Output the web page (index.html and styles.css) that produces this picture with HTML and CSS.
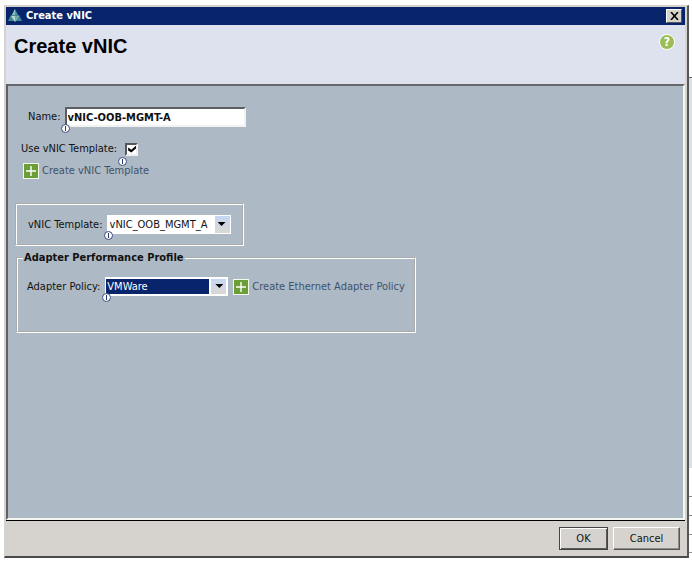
FILE: index.html
```html
<!DOCTYPE html>
<html lang="en">
<head>
<meta charset="utf-8">
<meta name="viewport" content="width=device-width, initial-scale=1">
<title>Create vNIC</title>
<link rel="stylesheet" href="styles.css">
</head>
<body>
<form class="window">
  <div class="titlebar">
    <svg class="app-icon" viewBox="0 0 14 14" aria-hidden="true">
      <path fill="#4f9299" d="M7 0l3 6H4z"/>
      <path fill="#8cc4c0" d="M7 0v6H4z"/>
      <path fill="#3f8794" d="M3 6h8l3 6H0z"/>
      <path fill="#b4d8d0" d="M3 7h8l-4 6z"/>
      <path fill="#6fa9a8" d="M7 7h4l-4 6z"/>
    </svg>
    <span class="caption">Create vNIC</span>
    <button type="button" class="close" aria-label="Close">
      <svg viewBox="0 0 9 8" aria-hidden="true"><path d="M1 0l7 8M8 0L1 8" stroke="#000" stroke-width="1.6"/></svg>
    </button>
  </div>
  <header class="header">
    <h1>Create vNIC</h1>
    <button type="button" class="help" aria-label="Help">?</button>
  </header>
  <main class="content">
    <div class="row name-row">
      <label for="name">Name:</label>
      <span class="field"><input id="name" class="text" type="text" value="vNIC-OOB-MGMT-A"><i class="info"></i></span>
    </div>
    <div class="row use-row">
      <label for="use">Use vNIC Template:</label>
      <span class="field check-field"><input id="use" class="check" type="checkbox" checked><i class="info"></i></span>
    </div>
    <div class="row link-row">
      <a class="create" href="#"><svg class="plus" viewBox="0 0 16 16" aria-hidden="true"><path fill="#f4faee" d="M0 0h16v16H0z"/><path fill="#6b9e37" d="M1 1h14v14H1z"/><path stroke="#fff" stroke-width="1.4" d="M8 3v10M3 8h10"/></svg>Create vNIC Template</a>
    </div>
    <section class="panel template-panel">
      <div class="row">
        <label for="template">vNIC Template:</label>
        <span class="field combo"><select id="template"><option>vNIC_OOB_MGMT_A</option></select><i class="info"></i></span>
      </div>
    </section>
    <fieldset class="panel adapter-panel">
      <legend>Adapter Performance Profile</legend>
      <div class="row">
        <label for="policy">Adapter Policy:</label>
        <span class="field combo selected"><select id="policy"><option>VMWare</option></select><i class="info"></i></span>
        <a class="create" href="#"><svg class="plus" viewBox="0 0 16 16" aria-hidden="true"><path fill="#f4faee" d="M0 0h16v16H0z"/><path fill="#6b9e37" d="M1 1h14v14H1z"/><path stroke="#fff" stroke-width="1.4" d="M8 3v10M3 8h10"/></svg>Create Ethernet Adapter Policy</a>
      </div>
    </fieldset>
  </main>
  <footer class="footer">
    <button type="submit" class="btn default">OK</button>
    <button type="button" class="btn">Cancel</button>
  </footer>
</form>
</body>
</html>
```
FILE: styles.css
```css
* { box-sizing: border-box; }

/* The right edge shows a sliver of the window behind. */
body {
  margin: 0;
  padding: 5px 3px 24px 4px;
  min-height: 100vh;
  display: flex;
  background:
    linear-gradient(#666, #666) right 77px / 3px 1px no-repeat,
    linear-gradient(#888, #888) right 496px / 3px 1px no-repeat,
    linear-gradient(#888, #888) right 515px / 3px 1px no-repeat,
    linear-gradient(#999, #999) right 534px / 3px 1px no-repeat,
    linear-gradient(#999, #999) right 552px / 3px 1px no-repeat,
    linear-gradient(#dde1e4, #dde1e4) right 78px / 3px 390px no-repeat,
    #fff;
  color: #111;
  font: 11px/16px "DejaVu Sans Condensed", "DejaVu Sans", sans-serif;
}

button, input, select { font: inherit; color: inherit; }

.window {
  flex: 1;
  display: flex;
  flex-direction: column;
  background: #d6d3ce;
  border: 1px solid #d6d3ce;
  border-right: 2px solid #55565a;
  border-bottom: 2px solid #4a4848;
  padding: 1px 2px 0 1px;
}

.titlebar {
  display: flex;
  align-items: center;
  height: 18px;
  padding: 0 3px 0 2px;
  background: #08246b;
  color: #fff;
  font-weight: bold;
}

.app-icon { width: 14px; height: 14px; margin-right: 4px; }

.caption { flex: 1; }

.close {
  display: flex;
  align-items: center;
  justify-content: center;
  width: 16px;
  height: 14px;
  padding: 0;
  background: #d6d3ce;
  border: 1px solid;
  border-color: #fff #555 #555 #fff;
}

.close svg { width: 9px; height: 8px; }

.header {
  display: flex;
  justify-content: space-between;
  height: 59px;
  padding: 9px 10px 0 8px;
  background: #dee2ef;
}

h1 {
  margin: 0;
  color: #000;
  font: bold 20px/24px "Liberation Sans", Arial, sans-serif;
}

.help {
  width: 16px;
  height: 16px;
  padding: 0;
  border: 1px solid #fff;
  border-radius: 50%;
  background: #9bbd57;
  color: #fff;
  font-size: 12px;
  font-weight: bold;
  line-height: 14px;
}

.content {
  flex: 1;
  padding: 21px 8px 8px 7px;
  background: #adb9c5;
  border: 2px solid;
  border-color: #66686b #f4f6f2 #f4f6f2 #5d6064;
}

.row { display: flex; align-items: center; white-space: nowrap; }

.name-row { padding-left: 13px; gap: 4px; }
.use-row { margin-top: 14px; padding-left: 6px; gap: 8px; }
.link-row { margin-top: 6px; padding-left: 8px; }

.field { position: relative; display: flex; }

.text {
  width: 181px;
  height: 20px;
  padding: 0 1px;
  background: #fff;
  border: 2px solid;
  border-color: #5b5d60 #f2f2f0 #f2f2f0 #5b5d60;
  font-weight: bold;
}

.check {
  appearance: none;
  width: 13px;
  height: 13px;
  margin: 0;
  background: #fff;
  border: 2px solid;
  border-color: #55575a #f0f0ee #f0f0ee #55575a;
}

.check-field::after {
  content: "";
  position: absolute;
  left: 3px;
  top: 3px;
  width: 8px;
  height: 7px;
  background: #000;
  clip-path: polygon(0 30%, 40% 60%, 100% 0, 100% 40%, 40% 100%, 0 70%);
  pointer-events: none;
}

.info {
  position: absolute;
  left: -4px;
  bottom: -6px;
  width: 9px;
  height: 9px;
  border: 1px solid #3c4a80;
  border-radius: 50%;
  background: linear-gradient(#28366e, #28366e) center / 1px 5px no-repeat #fff;
}

.combo .info { left: -3px; }
.check-field .info { left: -7px; bottom: -10px; }

.create {
  display: flex;
  align-items: center;
  gap: 3px;
  color: #3d536b;
  text-decoration: none;
}

.plus { width: 16px; height: 16px; }

.panel {
  margin: 0;
  border: 2px groove #fff;
}

.template-panel {
  width: 229px;
  margin-top: 24px;
  padding: 10px 10px 10px 11px;
}

.template-panel .row { gap: 4px; }

.combo select {
  appearance: none;
  width: 124px;
  height: 19px;
  padding: 0 18px 0 2px;
  border: 1px solid #fff;
  border-radius: 0;
  background: linear-gradient(#c5d7f4, #dad8d4) right / 15px 100% no-repeat #fff;
}

.combo::after {
  content: "";
  position: absolute;
  right: 5px;
  top: 7px;
  width: 8px;
  height: 4px;
  background: #000;
  clip-path: polygon(0 0, 100% 0, 50% 100%);
  pointer-events: none;
}

.adapter-panel {
  width: 397px;
  margin: 4px 0 0 1px;
  padding: 11px 9px 35px;
}

.adapter-panel legend {
  margin-left: -4px;
  padding: 0 1px;
  color: #111;
  font-weight: bold;
}

.adapter-panel .row { gap: 5px; }

.selected select {
  width: 123px;
  padding-left: 1px;
  border: 2px solid #fff;
  border-left-width: 1px;
  color: #fff;
  background:
    linear-gradient(#c5d7f4, #dad8d4) right / 15px 100% no-repeat,
    linear-gradient(#fff, #fff) right / 17px 100% no-repeat #08246b;
}

.footer {
  display: flex;
  align-items: center;
  justify-content: flex-end;
  gap: 5px;
  height: 36px;
  padding-right: 5px;
  border-top: 1px solid #000;
}

.btn {
  width: 67px;
  height: 23px;
  padding: 0;
  background: #d6d3ce;
  border: 1px solid;
  border-color: #fff #555 #555 #fff;
  box-shadow: inset -1px -1px #8e8c88;
}

.btn.default {
  width: 49px;
  border-color: #444;
  box-shadow: inset 1px 1px #fff, inset -1px -1px #5a5a5a;
}
```
